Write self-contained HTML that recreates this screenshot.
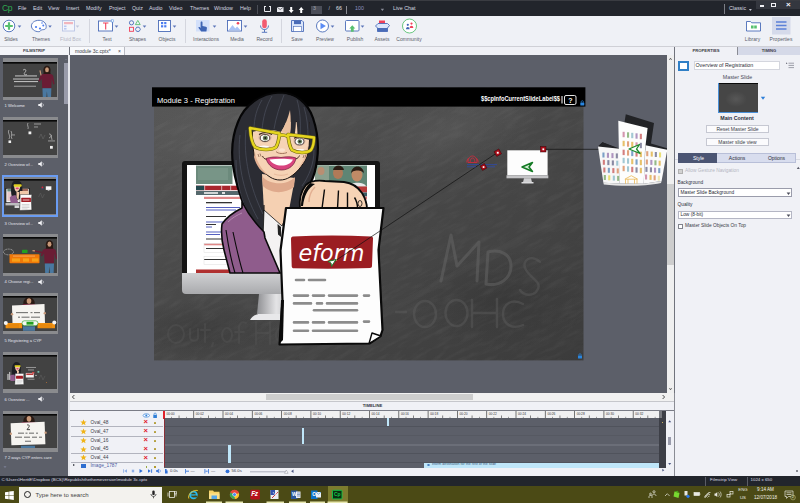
<!DOCTYPE html>
<html><head><meta charset="utf-8"><title>Adobe Captivate</title>
<style>
*{box-sizing:border-box;margin:0;padding:0}
html,body{width:800px;height:503px;overflow:hidden;background:#5c5f69;font-family:"Liberation Sans",sans-serif;}
#app{position:absolute;left:0;top:0;width:800px;height:503px;overflow:hidden;background:#5c5f69}
.abs{position:absolute}
.t{position:absolute;white-space:nowrap;line-height:1}
/* menu */
#menubar{left:0;top:0;width:800px;height:16px;background:#22252c;border-top:1px solid #3a3c42}
#menubar .m{position:absolute;top:5.2px;font-size:5.3px;color:#d6d8e0;white-space:nowrap;line-height:1}
/* toolbar */
#toolbar{left:0;top:16px;width:800px;height:30px;background:#eff1f6}
#toolbar .lbl{position:absolute;top:20.5px;font-size:5px;color:#5a5c66;white-space:nowrap;line-height:1;transform:translateX(-50%)}
#tabrow{left:0;top:46px;width:800px;height:9px;background:#f0f1f6;border-top:1px solid #cfd0d6}
</style></head><body>
<div id="app">
<!--MENUBAR-->
<div id="menubar" class="abs">
<div class="t" style="left:2px;top:3px;font-size:8.6px;color:#2fa84f;letter-spacing:-0.4px">Cp</div>
<div class="m" style="left:18px">File</div>
<div class="m" style="left:33px">Edit</div>
<div class="m" style="left:48px">View</div>
<div class="m" style="left:66px">Insert</div>
<div class="m" style="left:86px">Modify</div>
<div class="m" style="left:109px">Project</div>
<div class="m" style="left:132px">Quiz</div>
<div class="m" style="left:149px">Audio</div>
<div class="m" style="left:169px">Video</div>
<div class="m" style="left:190px">Themes</div>
<div class="m" style="left:214px">Window</div>
<div class="m" style="left:240px">Help</div>
<div class="abs" style="left:257px;top:4px;width:1px;height:9px;background:#4a4d55"></div>
<svg class="abs" style="left:262px;top:2px" width="46" height="12" viewBox="0 0 46 12">
<path d="M2.5 3.5v5h6v-5M2 3.5h2M7 3.5h2" fill="none" stroke="#e8e9ee" stroke-width="1"/>
<rect x="15" y="4" width="6.5" height="5" fill="#e8e9ee"/><path d="M15 4l3.2 2.6L21.5 4" fill="none" stroke="#22252c" stroke-width=".6"/>
<path d="M28.2 4h2v3h1.5l-2.5 3-2.5-3h1.5z" fill="#fff"/>
<path d="M38.2 10h2v-3h1.5l-2.5-3-2.5 3h1.5z" fill="#fff"/>
</svg>
<div class="abs" style="left:310.5px;top:5px;width:11.5px;height:8px;background:#4b4e58"></div>
<div class="m" style="left:313px;color:#9da0ab">3</div>
<div class="m" style="left:328.5px;color:#b9bbc6">/</div>
<div class="m" style="left:336px;color:#e0e1e8">66</div>
<div class="abs" style="left:346px;top:5px;width:1px;height:8px;background:#8a8c94"></div>
<div class="m" style="left:355px;color:#8f92c0">100</div>
<svg class="abs" style="left:379.500px;top:7px" width="5" height="4" viewBox="0 0 5 4"><path d="M.7 .8h3.400l-1.700 2.200z" fill="#8a8d99"/></svg>
<div class="m" style="left:393px">Live Chat</div>
<div class="abs" style="left:723.5px;top:3px;width:1px;height:10px;background:#7c7e86"></div>
<div class="m" style="left:729px">Classic</div>
<svg class="abs" style="left:747.500px;top:7px" width="5" height="4" viewBox="0 0 5 4"><path d="M.9 .9h3l-1.500 2z" fill="#c0c2cc"/></svg>
<div class="abs" style="left:756px;top:0px;width:44px;height:7.5px;background:#34373f"></div>
<div class="abs" style="left:760px;top:4px;width:4px;height:1.6px;background:#f0f0f4"></div>
<div class="abs" style="left:771px;top:1.5px;width:5px;height:4.5px;border:1.2px solid #f0f0f4"></div>
<div class="t" style="left:786px;top:-0.5px;font-size:8px;color:#f4f4f8;font-weight:bold">×</div>
</div>
<!--TOOLBAR-->
<div id="toolbar" class="abs">
<svg class="abs" style="left:0;top:0" width="800" height="30" viewBox="0 0 800 30">
<!-- slides -->
<circle cx="9" cy="10" r="5.8" fill="#fff" stroke="#4a6cb8" stroke-width="0.9"/>
<path d="M9 6.2v7.6M5.2 10h7.6" stroke="#58c070" stroke-width="2.2"/>
<path d="M17.7 9.5h3.600l-1.800 2.200z" fill="#5a74b8"/>
<!-- themes -->
<path d="M39 4.3c-4.6 0-7.6 2.8-7.6 5.6 0 3 3 5.8 7.4 5.8 1.8 0 1.6-1.4 2.8-1.8 1.6-.5 4.6.4 4.6-3.4 0-3.6-3.2-6.2-7.200-6.200z" fill="#fff" stroke="#4a6cb8" stroke-width="0.9"/>
<circle cx="36" cy="11" r="1.1" fill="#4c7df0"/><circle cx="40" cy="12.5" r="1.1" fill="#4c7df0"/><circle cx="43.300" cy="9.5" r="1" fill="#4c7df0"/><circle cx="42" cy="7" r=".8" fill="#4c7df0"/>
<path d="M48.2 9.5h3.600l-1.800 2.200z" fill="#5a74b8"/>
<!-- fluid box (disabled) -->
<rect x="62.500" y="4.500" width="12" height="10.500" fill="#f4f6fb" stroke="#b9c4e4" stroke-width="0.9"/>
<rect x="64" y="6" width="9" height="2.200" fill="#f2b6bd"/><rect x="64" y="9.500" width="2.500" height="1.600" fill="#b9c8f4"/><rect x="64" y="12" width="2.500" height="1.600" fill="#b9c8f4"/>
<path d="M75.7 9.5h3.600l-1.800 2.200z" fill="#c0c6dc"/>
<rect x="89" y="3" width="1" height="24" fill="#d4d6de"/>
<!-- text -->
<rect x="98.500" y="5" width="14" height="10" fill="#fff" stroke="#4a6cb8" stroke-width="0.9"/>
<rect x="111.300" y="3.800" width="2.200" height="2.200" fill="#fff" stroke="#6aa0e8" stroke-width="0.600"/>
<path d="M103 7h5.400M105.700 7v6.400" stroke="#f0405a" stroke-width="1.100" fill="none"/>
<path d="M114.7 9.5h3.600l-1.800 2.200z" fill="#5a74b8"/>
<!-- shapes -->
<circle cx="131.500" cy="6.800" r="2.100" fill="none" stroke="#4a6cb8" stroke-width="0.9"/>
<path d="M135.400 8.600l2.400-4.200 2.400 4.200z" fill="none" stroke="#58c070" stroke-width="0.9"/>
<rect x="129.500" y="11.300" width="4" height="4" fill="none" stroke="#f0405a" stroke-width="0.9"/>
<path d="M136.700 11.200h2.400l1.300 2.100-1.300 2.100h-2.400l-1.300-2.100z" fill="none" stroke="#4a6cb8" stroke-width="0.9"/>
<path d="M142.7 9.5h3.600l-1.800 2.200z" fill="#5a74b8"/>
<!-- objects -->
<rect x="158.500" y="4.500" width="12" height="11" fill="#fff" stroke="#4a6cb8" stroke-width="0.9"/>
<rect x="161" y="6" width="2.200" height="2.200" fill="#4c7df0"/><rect x="164.200" y="6" width="2.200" height="2.200" fill="#4c7df0"/><rect x="161" y="9.200" width="2.200" height="2.200" fill="#4c7df0"/><rect x="164.200" y="9.200" width="2.200" height="2.200" fill="#4c7df0"/>
<path d="M172.7 9.5h3.600l-1.800 2.200z" fill="#5a74b8"/>
<rect x="185" y="3" width="1" height="24" fill="#d4d6de"/>
<!-- interactions -->
<rect x="196" y="4" width="13.500" height="11.500" fill="#d3e0fa"/>
<path d="M201.500 5.500c.8 0 1 .5 1 1.200v3.300l3.400.7c.8.200 1.100.7 1 1.500l-.5 3.300h-5.200l-2.600-3.600c-.4-.6.300-1.300 1-.8l1 .8v-5.200c0-.7.200-1.200.9-1.200z" fill="#3d64b4"/>
<path d="M212.7 9.5h3.600l-1.800 2.200z" fill="#5a74b8"/>
<!-- media -->
<rect x="227.500" y="4.500" width="14" height="10.500" fill="#fff" stroke="#4a6cb8" stroke-width="0.9"/>
<path d="M228.500 14.200l4-5.200 2.800 3.400 1.800-1.800 3.400 3.600z" fill="#a9c2f6"/>
<circle cx="238" cy="7.300" r="1.300" fill="#f0405a"/>
<path d="M243.7 9.5h3.600l-1.800 2.200z" fill="#5a74b8"/>
<!-- record -->
<rect x="262.200" y="3.200" width="4.600" height="9" rx="2.300" fill="#f25a70"/>
<path d="M260.500 9.500c0 5.400 8 5.400 8 0M264.500 13.600v2.400M261.800 16.300h5.400" fill="none" stroke="#4a6cb8" stroke-width="0.9"/>
<rect x="281" y="3" width="1" height="24" fill="#d4d6de"/>
<!-- save -->
<path d="M291.500 4.500h10.500l1.500 1.500v9.500h-12z" fill="#dbe6fb" stroke="#4a6cb8" stroke-width="0.9"/>
<rect x="294" y="4.500" width="7" height="3.600" fill="#4a6cb8"/><rect x="293.500" y="10.500" width="8" height="5" fill="#fff" stroke="#4a6cb8" stroke-width="0.600"/>
<!-- preview -->
<circle cx="322.500" cy="10" r="6" fill="#fff" stroke="#4a6cb8" stroke-width="0.9"/>
<path d="M320.500 6.800v6.400l5.400-3.200z" fill="#5b8cf5"/>
<path d="M330.7 9.5h3.600l-1.800 2.200z" fill="#5a74b8"/>
<!-- publish -->
<rect x="345.500" y="4.500" width="13.500" height="10.500" rx="1" fill="#fff" stroke="#4a6cb8" stroke-width="0.9"/>
<path d="M352.300 9.300l3 3.200h-1.600v3.300h-2.800v-3.300h-1.600z" fill="#58c070"/>
<path d="M360.7 9.5h3.600l-1.800 2.200z" fill="#5a74b8"/>
<!-- assets -->
<path d="M379 4.500h6v5h-6z" fill="#f0405a"/>
<path d="M375.500 10l2.500-2.500h9.500l2 2-2 2.500v3.500h-10v-3.500z" fill="#dbe6fb" stroke="#4a6cb8" stroke-width="0.9"/>
<rect x="377.500" y="12" width="10" height="3.500" fill="#4a6cb8"/>
<!-- community -->
<circle cx="409.500" cy="10" r="7" fill="#fff" stroke="#58c070" stroke-width="0.9"/>
<circle cx="407.800" cy="8.800" r="1.100" fill="#3d64b4"/><path d="M406 13.200c0-3 3.600-3 3.600 0z" fill="#3d64b4"/>
<circle cx="411.500" cy="7.600" r="1.100" fill="#f0405a"/><path d="M409.700 12c0-3 3.600-3 3.600 0z" fill="#f0405a"/>
<!-- library -->
<path d="M746.500 5.500h4l1.200 1.300h8.800v8.200h-14z" fill="#fff" stroke="#4a6cb8" stroke-width="0.9"/>
<rect x="751" y="9.500" width="2.600" height="3" fill="#58c070"/><rect x="754.200" y="9.500" width="2.600" height="3" fill="#58c070"/>
<!-- properties -->
<rect x="772" y="1" width="18.500" height="17.500" fill="#d5daea"/>
<path d="M776 6h10.500M776 9.500h10.500M776 13h10.500" stroke="#5b80d8" stroke-width="1.300"/>
</svg>
<div class="lbl" style="left:11px;color:#5a5c68">Slides</div>
<div class="lbl" style="left:41px;color:#5a5c68">Themes</div>
<div class="lbl" style="left:70.5px;color:#b4b7c4">Fluid Box</div>
<div class="lbl" style="left:107px;color:#5a5c68">Text</div>
<div class="lbl" style="left:137.5px;color:#5a5c68">Shapes</div>
<div class="lbl" style="left:167px;color:#5a5c68">Objects</div>
<div class="lbl" style="left:206px;color:#5a5c68">Interactions</div>
<div class="lbl" style="left:237px;color:#5a5c68">Media</div>
<div class="lbl" style="left:264.5px;color:#5a5c68">Record</div>
<div class="lbl" style="left:297px;color:#5a5c68">Save</div>
<div class="lbl" style="left:325px;color:#5a5c68">Preview</div>
<div class="lbl" style="left:355px;color:#5a5c68">Publish</div>
<div class="lbl" style="left:382px;color:#5a5c68">Assets</div>
<div class="lbl" style="left:409px;color:#5a5c68">Community</div>
<div class="lbl" style="left:752.5px;color:#5a5c68">Library</div>
<div class="lbl" style="left:781px;color:#5a5c68">Properties</div>
</div>
<!--TABROW-->
<div id="tabrow" class="abs">
<div class="abs" style="left:0;top:0;width:69px;height:8px;background:#f4f5f9"></div>
<div class="t" style="left:34px;top:2px;font-size:4.2px;font-weight:bold;color:#3a3c46;transform:translateX(-50%)">FILMSTRIP</div>
<div class="abs" style="left:69px;top:0;width:1px;height:8px;background:#70737c"></div>
<div class="abs" style="left:70px;top:0;width:55px;height:8px;background:#f8f9fc;border-right:1px solid #b8bac2"></div>
<div class="t" style="left:75px;top:1.5px;font-size:5px;color:#3a3c46">module 3c.cptx*</div>
<div class="t" style="left:118px;top:1.5px;font-size:5px;color:#3a3c46">×</div>
<div class="abs" style="left:674px;top:0;width:1px;height:8px;background:#70737c"></div>
<div class="abs" style="left:737px;top:0;width:63px;height:8px;background:#d5d9e8;border-left:1px solid #8a8c94"></div>
<div class="t" style="left:706px;top:2px;font-size:4.2px;font-weight:bold;color:#3a3c46;transform:translateX(-50%)">PROPERTIES</div>
<div class="t" style="left:769px;top:2px;font-size:4.2px;font-weight:bold;color:#3a3c46;transform:translateX(-50%)">TIMING</div>
</div>
<!--FILMSTRIP-->
<div class="abs" id="filmstrip" style="left:0;top:55px;width:68px;height:421px;background:#5c5f69"></div>
<div class="abs" style="left:68px;top:55px;width:2px;height:421px;background:#e6e7ec"></div>
<div class="abs" style="left:64px;top:63px;width:3.5px;height:41px;background:#9a9cab"></div>
<div class="abs" style="left:64.5px;top:58.5px;border-left:1.2px solid transparent;border-right:1.2px solid transparent;border-bottom:1.6px solid #7d8196"></div>
<svg class="abs" style="left:2px;top:465px" width="6" height="4" viewBox="0 0 6 4"><path d="M1.500 1.200l1.500 1.800 1.500-1.800z" fill="#7d8196"/></svg>
<div class="abs" style="left:3px;top:58px;width:54.500px;height:41.500px;background:#8a8b8e"></div>
<div class="abs thumb" id="th1" style="left:3px;top:61.5px;width:54px;height:35.600px;background:#404040;overflow:hidden"><svg class="abs" style="left:0;top:0;width:100%;height:100%" viewBox="0 0 54 34.500" preserveAspectRatio="none"><rect width="54" height="34.500" fill="#424242"/><rect width="54" height="1.600" fill="#080808"/><g fill="none" stroke="#e4e4e4" stroke-width=".9" opacity=".9"><path d="M12 13.500h22M10 16.500h26M11 19h24"/></g><path d="M11 23.500h22" stroke="#b8b8b8" stroke-width=".8"/><path d="M20 8c2-2 4 0 2 2s0 3 2 2" stroke="#e0e0e0" stroke-width=".7" fill="none"/><g transform="translate(44 7) scale(0.95)"><path d="M-3.500 3c-1-4 1-6.500 3.500-6.500s4.500 2.500 3.500 6.500l1 6h-9z" fill="#2a1a14"/><ellipse cx="0" cy="0.500" rx="2" ry="2.600" fill="#c89878"/><path d="M-4 5c-1.500 0-3 1-3.500 3l-1.500 4 1.500.5 2-3 .5 10h9.500l.5-10 1.500 6 1.500-.5-1.500-8c-.5-1.500-2-2-3.500-2z" fill="#6a1c34"/><path d="M-4.800 19.500h9.400l-.4 10h-3.600l-.7-7-.7 7h-3.600z" fill="#4a78a0"/></g><path d="M38 13l-1-5" stroke="#c89878" stroke-width="1.200"/></svg></div>
<div class="t" style="left:4.500px;top:103.9px;font-size:4.100px;color:#e4e6ee">1 Welcome</div>
<svg class="abs" style="left:37.5px;top:102px" width="7" height="6" viewBox="0 0 7 6"><path d="M0.300 2h1.500l2-1.700v5.400l-2-1.700h-1.500z" fill="#f2f2f5"/><path d="M4.600 1.500c1 .8 1 2.200 0 3" stroke="#f2f2f5" stroke-width=".6" fill="none"/></svg>
<div class="abs" style="left:3px;top:117px;width:54.500px;height:40.6px;background:#8a8b8e"></div>
<div class="abs thumb" id="th2" style="left:3px;top:120.3px;width:54px;height:34.4px;background:#404040;overflow:hidden"><svg class="abs" style="left:0;top:0;width:100%;height:100%" viewBox="0 0 54 34.500" preserveAspectRatio="none"><rect width="54" height="34.500" fill="#424242"/><rect width="54" height="1.600" fill="#080808"/><g fill="#f0f0f0"><rect x="5.500" y="20.500" width="2.600" height="2.600"/><rect x="25.500" y="11.500" width="2.800" height="2.800"/><rect x="47" y="26" width="2.800" height="2.800"/></g><g stroke="#d8d8d8" stroke-width=".7" fill="none" opacity=".85"><path d="M6 10c-2 3 2 5 0 9M8 11c2 3-1 5 1 8M25 3c-1.500 2 1 4 0 6M46 14c3 0 3 3 0 4M48 15l1 5M45 21h7"/><path d="M31 4h7M31 7h4M9 15h3"/></g><path d="M36 18l2-4 2 5 2-4" stroke="#666" stroke-width=".6" fill="none"/></svg></div>
<div class="t" style="left:4.500px;top:162.9px;font-size:4.100px;color:#e4e6ee">2 Overview of...</div>
<svg class="abs" style="left:37.5px;top:161px" width="7" height="6" viewBox="0 0 7 6"><path d="M0.300 2h1.500l2-1.700v5.400l-2-1.700h-1.500z" fill="#f2f2f5"/><path d="M4.600 1.500c1 .8 1 2.200 0 3" stroke="#f2f2f5" stroke-width=".6" fill="none"/></svg>
<div class="abs" style="left:1.900px;top:175.400px;width:55.900px;height:41.600px;background:#6a9cf2"></div>
<div class="abs" style="left:4px;top:177.300px;width:51.900px;height:37.900px;background:#808286"></div>
<div class="abs thumb" id="th3" style="left:4px;top:179px;width:51.900px;height:34.500px;background:#404040;overflow:hidden"><svg class="abs" style="left:0;top:0;width:100%;height:100%" viewBox="0 0 54 34.500" preserveAspectRatio="none"><rect width="54" height="34.500" fill="#424242"/><rect width="54" height="1.600" fill="#080808"/><rect x="1.600" y="9" width="25" height="15" fill="#151515"/><rect x="2.400" y="9.700" width="23.400" height="13.600" fill="#f4f4f4"/><rect x="3.500" y="10" width="5" height="2.500" fill="#6c8a7c"/><rect x="3.500" y="13" width="4" height="9" fill="#e8c8c8"/><rect x="18.500" y="9.800" width="6.500" height="3" fill="#a06858"/><rect x="1.600" y="24" width="25" height="2.400" fill="#bcbcbe"/><rect x="11" y="26.400" width="5" height="2.600" fill="#d8d8da"/><path d="M12.500 1.200c-3 0-4.500 3-5 7-.5 4 0 9 1.500 12l3 2 6-3c1.500-4 1.500-10 .5-14-.8-3-3-4-6-4z" fill="#1e1f24"/><path d="M10.500 6c0 3 .5 6 3 7 2-1 3.500-3.500 3.500-6.500z" fill="#f0c8a8"/><rect x="10" y="5.300" width="8.400" height="2.400" rx="1" fill="#e0d020"/><ellipse cx="13.800" cy="9.300" rx="1.700" ry=".9" fill="#d8407a"/><path d="M7.500 17l-1.500 1.500 1 5.500h8l-3-8z" fill="#8f5c8c"/><path d="M13 13l0 5 2 4 1-9z" fill="#f0c8a8"/><path d="M16.500 12h9v4h-9z" fill="#f0c8a8"/><path d="M16.800 15.500h12.200l-.5 5 .4 10.500-12.600.5.300-6z" fill="#fafafa" stroke="#111" stroke-width=".4"/><rect x="18" y="18.800" width="10" height="4.200" rx=".5" fill="#a01c24"/><path d="M19.500 21h7" stroke="#f4d8d8" stroke-width=".9"/><g stroke="#b0b0b0" stroke-width=".5"><path d="M18.500 25.500h8M18.500 27h8M18.500 28.500h8M18.500 30h6"/></g><rect x="43.500" y="7.300" width="5.800" height="3.600" fill="#fafafa"/><rect x="45.500" y="10.900" width="1.800" height=".8" fill="#c8c8c8"/><circle cx="40" cy="8.500" r=".9" fill="#d8283c"/><path d="M38.500 9.800h3" stroke="#3050b0" stroke-width=".4"/><path d="M36 18l2-4 2 5 2-4" stroke="#5e5e5e" stroke-width=".6" fill="none"/></svg></div>
<div class="t" style="left:4.500px;top:221.9px;font-size:4.100px;color:#e4e6ee">3 Overview of...</div>
<svg class="abs" style="left:37.5px;top:220px" width="7" height="6" viewBox="0 0 7 6"><path d="M0.300 2h1.500l2-1.700v5.400l-2-1.700h-1.500z" fill="#f2f2f5"/><path d="M4.600 1.500c1 .8 1 2.200 0 3" stroke="#f2f2f5" stroke-width=".6" fill="none"/></svg>
<div class="abs" style="left:3px;top:234px;width:54.500px;height:41.500px;background:#8a8b8e"></div>
<div class="abs thumb" id="th4" style="left:3px;top:237.4px;width:54px;height:35.600px;background:#404040;overflow:hidden"><svg class="abs" style="left:0;top:0;width:100%;height:100%" viewBox="0 0 54 34.500" preserveAspectRatio="none"><rect width="54" height="34.500" fill="#424242"/><rect width="54" height="1.600" fill="#080808"/><ellipse cx="5.500" cy="14.500" rx="5" ry="2.800" fill="none" stroke="#e0e0e0" stroke-width=".6" stroke-dasharray="1 .6"/><rect x="19" y="12.300" width="5.500" height="3.200" rx=".5" fill="#22a020"/><rect x="6.500" y="16.600" width="30" height="8.800" rx=".8" fill="#f07808"/><path d="M10 18.500h22" stroke="#f8b070" stroke-width=".8"/><g fill="#f8a018"><rect x="9" y="20.700" width="8" height="3.200"/><rect x="20" y="20.700" width="6" height="3.200"/><rect x="29" y="20.700" width="6.500" height="3.200"/></g><g transform="translate(46.5 6.5) scale(0.98)"><path d="M-3.500 3c-1-4 1-6.500 3.500-6.500s4.500 2.500 3.500 6.500l1 6h-9z" fill="#2a1a14"/><ellipse cx="0" cy="0.500" rx="2" ry="2.600" fill="#c89878"/><path d="M-4 5c-1.500 0-3 1-3.500 3l-1.500 4 1.500.5 2-3 .5 10h9.500l.5-10 1.500 6 1.500-.5-1.500-8c-.5-1.500-2-2-3.500-2z" fill="#6a1c34"/><path d="M-4.800 19.500h9.400l-.4 10h-3.600l-.7-7-.7 7h-3.600z" fill="#4a78a0"/></g><path d="M39 15l-8-1.500" stroke="#6a1c34" stroke-width="1.300"/><path d="M32 13.500l-2.500-.3" stroke="#c89878" stroke-width="1.100"/></svg></div>
<div class="t" style="left:4.500px;top:280.4px;font-size:4.100px;color:#e4e6ee">4 Choose regi...</div>
<svg class="abs" style="left:37.5px;top:278.5px" width="7" height="6" viewBox="0 0 7 6"><path d="M0.300 2h1.500l2-1.700v5.400l-2-1.700h-1.500z" fill="#f2f2f5"/><path d="M4.600 1.500c1 .8 1 2.200 0 3" stroke="#f2f2f5" stroke-width=".6" fill="none"/></svg>
<div class="abs" style="left:3px;top:293px;width:54.500px;height:40.8px;background:#8a8b8e"></div>
<div class="abs thumb" id="th5" style="left:3px;top:296.2px;width:54px;height:34.8px;background:#404040;overflow:hidden"><svg class="abs" style="left:0;top:0;width:100%;height:100%" viewBox="0 0 54 34.500" preserveAspectRatio="none"><rect width="54" height="34.500" fill="#424242"/><rect width="54" height="1.600" fill="#080808"/><path d="M20.500 9c-1-5 2-7.500 5.500-7.500s6.500 2.500 5.500 7.500z" fill="#2a1a14"/><ellipse cx="26" cy="5" rx="2.300" ry="2.800" fill="#c89878"/><path d="M20 8h12l2 4h-16z" fill="#6a1c34"/><rect x="20" y="30" width="12" height="4.500" fill="#4a78a0"/><path d="M9 9.500l32.500-1.500.5 19.500-32.500.5z" fill="#f6f4f0"/><g stroke="#444" stroke-width=".8" fill="none"><path d="M13 16.500h12M27.500 16.500h2M31 16.500h6M15 21h2M18.500 21h8M28 21h9"/></g><circle cx="9" cy="18" r="1.200" fill="#c89878"/><circle cx="41.800" cy="17" r="1.200" fill="#c89878"/><g transform="translate(0 -1.200)"><rect x="2.600" y="28" width="16.500" height="5.200" rx=".6" fill="#f09010"/><rect x="34.500" y="28" width="17.500" height="5.200" rx=".6" fill="#f09010"/><path d="M5 30h11M5 32h11M37 30h12M37 32h12" stroke="#c87008" stroke-width=".5"/><rect x="19" y="25.800" width="16" height="4.800" rx="2.400" fill="#f4f8f4" stroke="#22a020" stroke-width=".6"/><rect x="23.500" y="26.800" width="7" height="2.800" fill="#22a020"/><circle cx="2.800" cy="28" r="2" fill="#f4f4f4"/><circle cx="51.300" cy="27.500" r="2" fill="#f4f4f4"/></g></svg></div>
<div class="t" style="left:4.500px;top:338.9px;font-size:4.100px;color:#e4e6ee">5 Registering a CYP</div>
<div class="abs" style="left:3px;top:352px;width:54.500px;height:40.6px;background:#8a8b8e"></div>
<div class="abs thumb" id="th6" style="left:3px;top:355.1px;width:54px;height:34.4px;background:#404040;overflow:hidden"><svg class="abs" style="left:0;top:0;width:100%;height:100%" viewBox="0 0 54 34.500" preserveAspectRatio="none"><rect width="54" height="34.500" fill="#424242"/><rect width="54" height="1.600" fill="#080808"/><path d="M13.500 7c-2.500 0-4 2.500-4.500 6-.4 3 0 7 1 9l2.500 1.500 4.500-2c1-3 1-8 .5-11-.6-2.500-2-3.500-4-3.500z" fill="#1e1f24"/><path d="M12 11c0 2.500.5 4.500 2.500 5.500 1.500-1 2.500-3 2.500-5z" fill="#f0c8a8"/><rect x="11.600" y="10.300" width="6" height="1.700" rx=".6" fill="#e0d020"/><ellipse cx="14.500" cy="13.800" rx="1.200" ry=".7" fill="#d8407a"/><path d="M8 20l-1.500 1 1 5h6l-2-6.500z" fill="#8f5c8c"/><path d="M14 16l0 3 1.500 1 .5-4z" fill="#f0c8a8"/><rect x="4.500" y="19" width="1" height="6" fill="#e8e8e8"/><rect x="6.200" y="17" width="1" height="8" fill="#d0d0d0"/><path d="M12.200 18.500h8.600l-.3 4 .3 7-9 .4.300-5z" fill="#fafafa" stroke="#111" stroke-width=".3"/><rect x="13" y="20.800" width="7" height="3" rx=".4" fill="#a01c24"/><g stroke="#b0b0b0" stroke-width=".4"><path d="M13.500 25.500h6M13.500 26.800h6M13.500 28h5"/></g><rect x="22.800" y="18" width="8" height="4.600" fill="#f4f4f4"/><rect x="23.300" y="18.500" width="7" height="1.600" fill="#b83a3a"/><rect x="29" y="17" width="2.400" height="1.600" fill="#c84848"/><g stroke="#e0e0e0" stroke-width=".6" fill="none" opacity=".9"><path d="M23 12.500h10M25 15h6M24.500 24.300h7"/><path d="M32 20.500h2"/></g><rect x="34.500" y="16" width="1.800" height="1.800" fill="#70b8a8"/><path d="M36 24l2-4 2 5 2-4" stroke="#5e5e5e" stroke-width=".6" fill="none"/><circle cx="43.500" cy="27.500" r=".5" fill="#c87830"/></svg></div>
<div class="t" style="left:4.500px;top:397.9px;font-size:4.100px;color:#e4e6ee">6 Overview ...</div>
<svg class="abs" style="left:37.5px;top:396px" width="7" height="6" viewBox="0 0 7 6"><path d="M0.300 2h1.500l2-1.700v5.400l-2-1.700h-1.500z" fill="#f2f2f5"/><path d="M4.600 1.500c1 .8 1 2.200 0 3" stroke="#f2f2f5" stroke-width=".6" fill="none"/></svg>
<div class="abs" style="left:3px;top:411px;width:54.500px;height:40.700px;background:#8a8b8e"></div>
<div class="abs thumb" id="th7" style="left:3px;top:413.500px;width:54px;height:34.800px;background:#404040;overflow:hidden"><svg class="abs" style="left:0;top:0;width:100%;height:100%" viewBox="0 0 54 34.500" preserveAspectRatio="none"><rect width="54" height="34.500" fill="#424242"/><rect width="54" height="1.600" fill="#080808"/><path d="M20.500 9c-1-5 2-7.500 5.500-7.500s6.500 2.500 5.500 7.500z" fill="#2a1a14"/><ellipse cx="26" cy="4.800" rx="2.300" ry="2.800" fill="#c89878"/><path d="M19 8h14l2 4h-18z" fill="#6a1c34"/><rect x="18" y="31.500" width="14" height="3" fill="#4a78a0"/><path d="M7.600 9.200l34-1.600.8 22.400-34 1z" fill="#f6f4f0"/><path d="M24 11c2-1 3 1 1.500 2.500l-1.500 2h3" stroke="#333" stroke-width=".9" fill="none"/><g stroke="#444" stroke-width=".8" fill="none"><path d="M15 19h6M22.500 19h2M26 19h5M33 19h2M12 23h7M21 23h6M29 23h5M36 23h3M22 27h6"/></g><circle cx="7.800" cy="19.500" r="1.200" fill="#c89878"/><circle cx="42.600" cy="18.500" r="1.200" fill="#c89878"/></svg></div>
<div class="t" style="left:4.500px;top:455.8px;font-size:4.100px;color:#e4e6ee">7 2 ways CYP enters care</div>

<!--STAGE-->
<div class="abs" id="stage" style="left:70px;top:55px;width:596.500px;height:338px;background:#5c5f69"></div>
<div class="abs" style="left:666.500px;top:55px;width:7.500px;height:338px;background:#efefef"></div>
<div class="abs" style="left:666.500px;top:184px;width:7.500px;height:81px;background:#cdcdcd"></div>
<div class="abs" style="left:669px;top:58px;width:3px;height:3px;border-left:1px solid #555;border-top:1px solid #555;transform:rotate(45deg) scale(.7)"></div>
<div class="abs" style="left:669px;top:387px;width:3px;height:3px;border-right:1px solid #555;border-bottom:1px solid #555;transform:rotate(45deg) scale(.7)"></div>
<svg class="abs" style="left:70px;top:55px" width="596.500" height="338" viewBox="70 55 596.500 338">
<defs>
<linearGradient id="cb" x1="0" y1="0" x2="1" y2="1"><stop offset="0" stop-color="#575757"/><stop offset=".35" stop-color="#4a4a4a"/><stop offset=".7" stop-color="#434343"/><stop offset="1" stop-color="#3b3b3b"/></linearGradient>
<radialGradient id="sm1" cx=".5" cy=".5" r=".5"><stop offset="0" stop-color="#6a6a6a" stop-opacity=".35"/><stop offset="1" stop-color="#6a6a6a" stop-opacity="0"/></radialGradient>
<radialGradient id="sm2" cx=".5" cy=".5" r=".5"><stop offset="0" stop-color="#2e2e2e" stop-opacity=".4"/><stop offset="1" stop-color="#2e2e2e" stop-opacity="0"/></radialGradient>
<linearGradient id="alu" x1="0" y1="0" x2="0" y2="1"><stop offset="0" stop-color="#d0d1d3"/><stop offset="1" stop-color="#a9aaad"/></linearGradient>
<linearGradient id="stand" x1="0" y1="0" x2="1" y2="0"><stop offset="0" stop-color="#8e8f92"/><stop offset=".4" stop-color="#e4e4e6"/><stop offset="1" stop-color="#9a9b9e"/></linearGradient>
<filter id="chalk" x="0" y="0" width="100%" height="100%"><feTurbulence type="fractalNoise" baseFrequency="0.05 0.25" numOctaves="3" seed="3" result="n"/><feColorMatrix type="matrix" values="0 0 0 0 0.62  0 0 0 0 0.62  0 0 0 0 0.62  0.9 0 0 0 -0.36"/></filter>
<clipPath id="slideclip"><rect x="154" y="87" width="429.500" height="273.400"/></clipPath>
</defs>
<!-- slide -->
<rect x="154" y="106" width="429.500" height="254.400" fill="url(#cb)"/>
<g clip-path="url(#slideclip)">
<ellipse cx="230" cy="140" rx="90" ry="45" fill="url(#sm1)"/>
<ellipse cx="450" cy="130" rx="110" ry="40" fill="url(#sm1)" transform="rotate(-20 450 130)"/>
<ellipse cx="500" cy="300" rx="90" ry="50" fill="url(#sm2)"/>
<ellipse cx="200" cy="330" rx="80" ry="30" fill="url(#sm2)"/>
<rect x="-80" y="40" width="760" height="420" filter="url(#chalk)" opacity=".14" transform="rotate(-28 368 233)"/>
<g stroke="#5d5d5d" stroke-width="7" opacity=".13"><path d="M380 230L590 120M300 360L590 200M154 200L330 106"/></g>
<!-- chalk writing -->
<g fill="none" stroke="#666" stroke-width="3" stroke-linecap="round" stroke-linejoin="round" opacity=".52">
<path d="M441 281L451 235L457 266L479 242L477 281"/>
<path d="M488 252L486 284C500 287 511 278 511 266C511 254 500 249 488 252Z"/>
</g>
<g fill="none" stroke="#5c5c5c" stroke-width="2.400" stroke-linecap="round" opacity=".48">
<path d="M540 262C532 254 520 260 526 270C532 280 544 282 536 292C532 296 524 296 520 290"/>
<path d="M396 312h10"/>
<ellipse cx="425" cy="314" rx="11" ry="13"/><ellipse cx="456.500" cy="313" rx="11" ry="13"/>
<path d="M472 300v27M472 313h25M497 299v28"/>
<path d="M523 304C512 298 503 304 503 314C503 324 512 330 523 325"/>
</g>
<g fill="none" stroke="#555" stroke-width="2" stroke-linecap="round" opacity=".42">
<ellipse cx="176" cy="334" rx="8" ry="9"/><path d="M190 329v8c0 5 8 5 8 0v-8M205 324v18M201 330h9M213 343l-1 3"/>
<ellipse cx="227" cy="335" rx="5" ry="7"/><path d="M246 323c-5-2-7 1-7 5v15M235 332h9"/>
<path d="M256 322v22M256 333h14M270 322v22"/><ellipse cx="281" cy="335" rx="5" ry="7"/>
</g>
</g>
<!-- header -->
<rect x="152" y="87.300" width="433.400" height="19.300" fill="#000"/>
<text x="157" y="102.700" font-size="7.600" fill="#fff" font-family="Liberation Sans, sans-serif" textLength="78" lengthAdjust="spacingAndGlyphs">Module 3 - Registration</text>
<text x="481" y="101.300" font-size="7.200" font-weight="bold" fill="#fff" font-family="Liberation Sans, sans-serif" textLength="79" lengthAdjust="spacingAndGlyphs">$$cpInfoCurrentSlideLabel$$</text>
<rect x="561.500" y="96" width="1" height="7.500" fill="#fff"/>
<rect x="564.500" y="95.500" width="11.500" height="9" rx="1.500" fill="none" stroke="#fff" stroke-width=".9"/>
<text x="568.300" y="102.800" font-size="7" font-weight="bold" fill="#fff" font-family="Liberation Sans, sans-serif">?</text>
<rect x="580.300" y="102.500" width="4" height="3" rx=".5" fill="#2a86e0"/><path d="M581.200 102.500v-.8c0-1.300 2.200-1.300 2.200 0v.8" fill="none" stroke="#2a86e0" stroke-width=".7"/>
<rect x="578" y="355.500" width="4" height="3" rx=".5" fill="#2a86e0"/><path d="M578.900 355.500v-.8c0-1.300 2.200-1.300 2.200 0v.8" fill="none" stroke="#2a86e0" stroke-width=".7"/>
<g id="imac">
<path d="M185 161h192a3 3 0 0 1 3 3v109h-198v-109a3 3 0 0 1 3-3z" fill="#141414"/>
<path d="M182 273h198v17a4 4 0 0 1-4 4h-190a4 4 0 0 1-4-4z" fill="url(#alu)"/>
<path d="M259 294h44l2 20h-48z" fill="url(#stand)"/>
<path d="M250 320c2-4 6-6 10-6h44v6z" fill="#e8e8ea"/>
<rect x="187" y="165" width="188" height="108" fill="#fff"/>
<rect x="196" y="165.500" width="36.500" height="18.500" fill="#6c8a7c"/>
<rect x="198" y="168" width="30" height="12" fill="#7d9a8c" opacity=".7"/>
<rect x="196" y="185.700" width="120" height="4.500" fill="#a8242c"/>
<rect x="196" y="185.700" width="8" height="4.500" fill="#24484e"/>
<rect x="204.500" y="185.700" width=".6" height="4.500" fill="#fff"/><rect x="221.500" y="185.700" width=".6" height="4.500" fill="#fff"/><rect x="230.500" y="185.700" width=".6" height="4.500" fill="#fff"/>
<rect x="196" y="191" width="120" height="4" fill="#55686c"/>
<rect x="204" y="192" width="14" height="2" fill="#d0d4d4"/><rect x="222" y="192" width="3" height="2" fill="#e0e0e0"/>
<rect x="204" y="196.800" width="60" height="2.200" fill="#e08888"/>
<g fill="#333"><rect x="206" y="202" width="26" height="1.300"/><rect x="206" y="216" width="20" height="1"/><rect x="206" y="224" width="10" height="1"/><rect x="206" y="238.500" width="18" height="1"/><rect x="206" y="248" width="17" height="1"/><rect x="204" y="259" width="24" height="1"/></g>
<g fill="#5560c0"><rect x="206" y="207" width="34" height="1"/><rect x="206" y="209.500" width="30" height="1"/><rect x="206" y="221.500" width="22" height="1"/><rect x="206" y="226.500" width="6" height="1"/><rect x="206" y="231.500" width="20" height="1"/><rect x="206" y="234" width="14" height="1"/></g>
<rect x="204" y="243.500" width="36" height="1.800" fill="#e08888"/>
<rect x="204" y="243.500" width="36" height="9" fill="none" stroke="#ddd" stroke-width=".5"/>
<rect x="204" y="256.500" width="36" height="8" fill="none" stroke="#ddd" stroke-width=".5"/>
<rect x="196" y="269.500" width="50" height="3.500" fill="#b03030"/>
<!-- photo -->
<rect x="315" y="165.500" width="52" height="21" fill="#5f8574"/>
<rect x="315" y="165.500" width="14" height="21" fill="#8aa08e"/>
<ellipse cx="321" cy="171" rx="3.500" ry="4" fill="#b98e72"/><path d="M316 186.500c0-8 10-8 10 0z" fill="#d8d0c8"/>
<ellipse cx="338" cy="173" rx="5" ry="6" fill="#b07a58"/><path d="M333 170c1-6 10-6 11 0z" fill="#2a1c14"/><path d="M330 186.500c1-7 15-7 16 0z" fill="#c84848"/>
<ellipse cx="357" cy="175" rx="5.500" ry="6.500" fill="#c08a66"/><path d="M351 174c0-10 13-10 13 0 0-4-12-5-13 0z" fill="#2a1c14"/><path d="M349 186.500c1-5 16-5 17 0z" fill="#e8e8e8"/>
<rect x="353" y="186.500" width="14" height="6" fill="#b83a3a"/><rect x="353" y="192.500" width="14" height="4" fill="#3a5a62"/><rect x="353" y="196.500" width="14" height="3" fill="#d87878"/>
</g>

<g id="char" stroke-linejoin="round">
<!-- hair silhouette -->
<path d="M280 92.500C296 93 308 103 313 118C317 130 319 146 317 160C316 168 314 176 311 182L304 190L300 210L286 210L266 240C258 232 251 222 246 210C240 196 235 180 233 165C231 150 233 134 238 122C244 106 260 93 280 92.500Z" fill="#2b2c33" stroke="#050506" stroke-width="2.200"/>
<path d="M236 160c0 20 5 40 14 56M240 135c-3 24 2 56 18 84M246 130c-3 26 4 58 17 84" fill="none" stroke="#484b58" stroke-width=".8"/>
<path d="M314 150c0 14-5 26-12 36" fill="none" stroke="#484b58" stroke-width=".8"/>
<!-- neck -->
<path d="M262 174L264 212L282 238L289 210L295 178Z" fill="#f5d0b2"/>
<path d="M262 176c7 9 25 10 33 1l-1 10c-9 7-23 7-31-1z" fill="#dfa98c"/>
<path d="M264 205l0 32" stroke="#050506" stroke-width="1" />
<!-- shirt -->
<path d="M264 210L263 238L277 273L288 273L288 212L282 226Z" fill="#f4f2f2" stroke="#111" stroke-width=".8"/>
<path d="M277.500 224l3.500 3v10l-3-2.500z" fill="#222"/>
<!-- jacket -->
<path d="M242 208c-8 4-16 10-20 16-1 8 0 18 2 26l6 23h50l-15-35-1-6c-8-8-16-18-22-30z" fill="#8f5c8c" stroke="#0a0a0a" stroke-width="1.600"/>
<path d="M226 230c2 14 5 30 9 43M233 232c3 14 6 28 10 41" fill="none" stroke="#0a0a0a" stroke-width="1.100"/>
<path d="M228 222c4-4 9-7 14-9" fill="none" stroke="#b488b0" stroke-width="1"/>
<!-- face -->
<path d="M253 120C252 132 252 144 254 154C256 164 262 172 270 177C276 181 284 181 290 177C298 172 305 163 308 153C310 144 310 132 309 122Z" fill="#f6d3b5" stroke="#1a1210" stroke-width="1"/>
<path d="M255 152c1 8 6 17 13 23-6-2-12-9-14-18z" fill="#e3b092"/>
<path d="M307 146c0 8-4 16-9 22 6-4 10-12 10-20z" fill="#e9bc9e"/>
<!-- bangs -->
<path d="M252 132C250 118 256 104 266 98C274 93 288 93 296 98C306 104 311 120 310 140L297.500 137C297.500 130 297 124 296 118C296 124 295.500 130 294.500 135.500L290 134C291 126 291 118 290 110C288 118 285 126 281 132C272 129 262 129 252 132Z" fill="#2b2c33"/>
<path d="M290 110C288 118 285 126 281 132L290 134C291 126 291 118 290 110Z" fill="#e9c0a0"/>
<path d="M262 100c-5 8-8 18-8 30M272 96c-6 10-9 22-10 34M284 95c-4 10-8 22-10 34M297 100c3 10 4 22 3 36M304 107c3 10 4 20 4 30" fill="none" stroke="#484b58" stroke-width=".8"/>
<!-- eyes -->
<ellipse cx="265" cy="137.500" rx="6.500" ry="5" fill="#c9a596" opacity=".7"/><ellipse cx="299.500" cy="141" rx="6" ry="4.800" fill="#c9a596" opacity=".7"/>
<ellipse cx="265" cy="138" rx="4.800" ry="3.600" fill="#fff" stroke="#3a2a24" stroke-width=".8"/><circle cx="265.300" cy="138" r="2.500" fill="#66805a"/><circle cx="265.300" cy="138" r="1.100" fill="#1a1a1a"/>
<ellipse cx="299.500" cy="141.500" rx="4.400" ry="3.400" fill="#fff" stroke="#3a2a24" stroke-width=".8"/><circle cx="299.800" cy="141.500" r="2.300" fill="#66805a"/><circle cx="299.800" cy="141.500" r="1" fill="#1a1a1a"/>
<path d="M259 134.500c4-2.500 9-2.500 13 0M294 138.300c4-2.500 8-2.500 11.500 0" stroke="#2a1a18" stroke-width="1.100" fill="none"/>
<ellipse cx="264" cy="147" rx="5" ry="1.500" fill="#fff" opacity=".9"/><ellipse cx="300" cy="150.500" rx="4.500" ry="1.400" fill="#fff" opacity=".9"/>
<!-- glasses -->
<g fill="none" stroke-linejoin="round">
<path d="M250 128L279.500 133.500C279 139 278 144 276 147C272 150.500 260 150 255 147C251.500 143 250.500 136 250 128Z" stroke="#6e6612" stroke-width="3.600"/>
<path d="M288 134.500L314 137.500C314 142 313 147 311 150C307 153.500 297 153 292 150C289 146 288.500 140 288 134.500Z" stroke="#6e6612" stroke-width="3.600"/>
<path d="M279 135.500C282 134.500 285 135 288 136.500" stroke="#6e6612" stroke-width="3.400"/>
<path d="M250 128L279.500 133.500C279 139 278 144 276 147C272 150.500 260 150 255 147C251.500 143 250.500 136 250 128Z" stroke="#e6d620" stroke-width="2.400"/>
<path d="M288 134.500L314 137.500C314 142 313 147 311 150C307 153.500 297 153 292 150C289 146 288.500 140 288 134.500Z" stroke="#e6d620" stroke-width="2.400"/>
<path d="M279 135.500C282 134.500 285 135 288 136.500" stroke="#e6d620" stroke-width="2.400"/>
</g>
<!-- nose -->
<path d="M276 151.500c2 2.500 8 2.500 11 1" fill="none" stroke="#9a6a54" stroke-width=".9"/>
<ellipse cx="282" cy="150" rx="3" ry="1.800" fill="#fbe3cf"/>
<!-- mouth -->
<path d="M266 158.500C270 157 276 156.500 281 157.500C286 156.500 292 156.500 296 158C295 165 289 170 281.500 170C274 170 268 165.500 266 158.500Z" fill="#d8447e" stroke="#6a1838" stroke-width=".7"/>
<path d="M269.500 159.500C277 158.500 286 158.500 293 159.500C291 163.500 286.500 165.500 281.500 165.500C276.500 165.500 272 163.500 269.500 159.500Z" fill="#fff"/>
<path d="M262.500 156c.8 2 2 3 4 3.300M299.500 155.500c-.8 2-2 3-3.500 3.300" stroke="#3a2018" stroke-width=".9" fill="none"/>
<path d="M258 154l1 3M260 153.500l1 3M304 155l-1 3M306 154.500l-1 3" stroke="#6a4030" stroke-width=".6"/>
<path d="M274 174c4 1.500 10 1.500 14 0" stroke="#e9bc9e" stroke-width="1.200" fill="none"/>
<!-- hand -->
<path d="M300 209C299 200 301 191 306 185C310 181 317 180 325 181L344 182C352 183 358 187 362 193C365 198 367 204 367 209Z" fill="#f6d3b5" stroke="#0a0a0a" stroke-width="1.800"/>
<path d="M303 206C304 196 308 188 315 184L310 183C304 188 301 197 301 206Z" fill="#0a0a0a"/>
<path d="M322 208.500l2.500-19M337.500 208.500l1-18M347.500 208.500l0-16M357.500 208.500c0-4-1-8-3-11" fill="none" stroke="#0a0a0a" stroke-width="1.400"/>
<path d="M309 202c0-6 2-11 6-15" stroke="#e3b092" stroke-width="1.500" fill="none"/>
<ellipse cx="360" cy="203.500" rx="2" ry="3" fill="none" stroke="#0a0a0a" stroke-width=".8"/>
</g>
<g id="paper">
<path d="M286 208l97.500 0-5 42 4 80-2 6-11 7.500-90 1 3-44-2-50z" fill="#fdfdfd" stroke="#0a0a0a" stroke-width="2.200" stroke-linejoin="round"/>
<path d="M369 343.500l3-10.500 9 3z" fill="#fff" stroke="#0a0a0a" stroke-width="1.400" stroke-linejoin="round"/>
<path d="M281 300l-2 44 4-4 1-40z" fill="#0a0a0a"/>
<path d="M293 236.500c26-1.500 52-1.500 78 0 1.500.1 2 .8 2 2l-1 27.500c0 1.200-.8 2-2 2-26 1-52 1-76 .3-1.500 0-2.300-.8-2.300-2.300l-.7-27c0-1.500.6-2.400 2-2.500z" fill="#9b1d22"/>
<text x="331.500" y="260.500" text-anchor="middle" font-size="23" font-style="italic" fill="#fff" font-family="DejaVu Sans, Liberation Sans, sans-serif" textLength="66" lengthAdjust="spacingAndGlyphs">eform</text>
<g stroke="#8c8c8c" stroke-width="2.600" stroke-linecap="round">
<path d="M296 280h8M309 280h16"/>
<path d="M294 295.600h14M313 295.600h11M329 295.600h28M364 295.600h5"/>
<path d="M294 303.400h17M317 303.400h5M327 303.400h30"/>
<path d="M314 310.200h43"/>
<path d="M294 322.400h14M313 322.400h11M329 322.400h28M364 321.600h5"/>
<path d="M294 330.800h14M313 330.800h44"/>
</g>
</g>

<g id="rightobj">
<path d="M332 263L497.500 152.500" stroke="#111" stroke-width=".7"/>
<path d="M543 149.300H620" stroke="#111" stroke-width=".7"/>
<!-- cursor markers -->
<path d="M328 261.500l8-2-4.500 7-.5-3.500z" fill="#fff" stroke="#1c7a2c" stroke-width="1"/>
<!-- logo -->
<g fill="none" stroke="#d8283c" stroke-width=".8"><path d="M468 162.500c0-4 2-6.500 4.500-6.500s4.500 2.500 4.500 6.500z"/><path d="M470 162.500c.3-3 1.200-4.500 2.500-4.500s2.200 1.500 2.500 4.500M466.800 162.500c0-2 .8-3.500 2-4.500M478.200 162.500c0-2-.8-3.500-2-4.500"/></g>
<path d="M467 164.600h12M481 164.600h16M467 166.800h9M485 166.800h10" stroke="#2a4ab0" stroke-width=".9" opacity=".85"/>
<!-- small monitor -->
<rect x="507.300" y="150.300" width="40.300" height="25" fill="#fdfdfd"/>
<rect x="506.500" y="175.300" width="41.800" height="3" fill="#c4c4c6"/>
<path d="M524 178.300h7l1 4h-9z" fill="#cfcfd1"/><rect x="521.500" y="182" width="12" height="1.500" fill="#dcdcde"/>
<path d="M522 167l10.500-4.500-3.500 4.500 3.500 4.500z" fill="#d8f0d8" stroke="#147a24" stroke-width="1.500" stroke-linejoin="round"/>
<!-- handles -->
<g fill="#a80c18" stroke="#3a0408" stroke-width=".5"><rect x="495" y="150" width="5.500" height="5.500" transform="rotate(-30 497.700 152.700)"/><rect x="481" y="164.500" width="5" height="5" transform="rotate(-30 483.500 167)"/><rect x="540.500" y="146.500" width="5.500" height="5.500"/></g>
<g fill="#fff"><rect x="496.800" y="151.800" width="1.900" height="1.900"/><rect x="482.700" y="166.200" width="1.700" height="1.700"/><rect x="542.400" y="148.400" width="1.800" height="1.800"/></g>
<!--BLD0-->
<path d="M625.800 114.300L654 123L651 143.500L667.500 148.500L666 152L645 150L619 149L602.500 142.200L598 146.500L620 150Z" fill="#222326"/>
<path d="M602.500 142.200L619.500 148.500L619.500 150L598 146.500Z" fill="#222326"/>
<path d="M598 146.500L619.500 148.800L619.500 183.500L603.400 182.800Z" fill="#f7f7f7"/>
<path d="M645.500 145.300L667.300 149.700L661.600 181L643.700 183.800Z" fill="#fbfbfb"/>
<path d="M618.300 120.700L647.600 127.900L645 150L643.700 183.800L619.500 183.500Z" fill="#fdfdfd"/>
<path d="M603.400 182.800L619.500 183.500L643.700 183.800L661.600 181L661 183C645 186.500 620 186.500 603.800 184.500Z" fill="#e6e6e6"/>
<rect x="622.6" y="131.8" width="2.100" height="5.400" fill="#c87898" opacity=".78"/><rect x="627.0" y="132.3" width="2.100" height="5.400" fill="#78a868" opacity=".78"/><rect x="631.2" y="132.8" width="2.100" height="5.400" fill="#88b8c8" opacity=".78"/><rect x="635.5" y="133.3" width="2.100" height="5.400" fill="#9a78b0" opacity=".78"/><rect x="639.8" y="133.8" width="2.100" height="5.400" fill="#c85a5a" opacity=".78"/><rect x="622.6" y="140.8" width="2.100" height="5.400" fill="#e0b040" opacity=".78"/><rect x="627.0" y="141.3" width="2.100" height="5.400" fill="#d88858" opacity=".78"/><rect x="631.2" y="141.8" width="2.100" height="5.400" fill="#e0b040" opacity=".78"/><rect x="635.5" y="142.3" width="2.100" height="5.400" fill="#c87898" opacity=".78"/><rect x="639.8" y="142.8" width="2.100" height="5.400" fill="#6a6a8a" opacity=".78"/><rect x="622.6" y="149.7" width="2.100" height="5.400" fill="#c85a5a" opacity=".78"/><rect x="627.0" y="150.2" width="2.100" height="5.400" fill="#d88858" opacity=".78"/><rect x="631.2" y="150.7" width="2.100" height="5.400" fill="#5888b8" opacity=".78"/><rect x="635.5" y="151.2" width="2.100" height="5.400" fill="#c85a5a" opacity=".78"/><rect x="639.8" y="151.7" width="2.100" height="5.400" fill="#e0b040" opacity=".78"/><rect x="622.6" y="157.8" width="2.100" height="5.400" fill="#88b8c8" opacity=".78"/><rect x="627.0" y="158.3" width="2.100" height="5.400" fill="#88b8c8" opacity=".78"/><rect x="631.2" y="158.8" width="2.100" height="5.400" fill="#e0b040" opacity=".78"/><rect x="635.5" y="159.3" width="2.100" height="5.400" fill="#5888b8" opacity=".78"/><rect x="639.8" y="159.8" width="2.100" height="5.400" fill="#e0b040" opacity=".78"/><rect x="622.6" y="165.8" width="2.100" height="5.400" fill="#d88858" opacity=".78"/><rect x="627.0" y="166.3" width="2.100" height="5.400" fill="#88b8c8" opacity=".78"/><rect x="631.2" y="166.8" width="2.100" height="5.400" fill="#c85a5a" opacity=".78"/><rect x="635.5" y="167.3" width="2.100" height="5.400" fill="#6a6a8a" opacity=".78"/><rect x="639.8" y="167.8" width="2.100" height="5.400" fill="#e0b040" opacity=".78"/><rect x="602.4" y="152.5" width="2.100" height="5" fill="#5888b8" opacity=".78"/><rect x="606.9" y="152.8" width="2.100" height="5" fill="#9a78b0" opacity=".78"/><rect x="611.4" y="153.1" width="2.100" height="5" fill="#9a78b0" opacity=".78"/><rect x="615.8" y="153.4" width="2.100" height="5" fill="#6a6a8a" opacity=".78"/><rect x="602.8" y="159.8" width="2.100" height="5" fill="#c85a5a" opacity=".78"/><rect x="607.3" y="160.1" width="2.100" height="5" fill="#6a6a8a" opacity=".78"/><rect x="611.8" y="160.4" width="2.100" height="5" fill="#6a6a8a" opacity=".78"/><rect x="616.2" y="160.7" width="2.100" height="5" fill="#88b8c8" opacity=".78"/><rect x="603.3" y="167.5" width="2.100" height="5" fill="#c85a5a" opacity=".78"/><rect x="607.8" y="167.8" width="2.100" height="5" fill="#5888b8" opacity=".78"/><rect x="612.3" y="168.1" width="2.100" height="5" fill="#c85a5a" opacity=".78"/><rect x="616.7" y="168.4" width="2.100" height="5" fill="#d88858" opacity=".78"/><rect x="603.8" y="175.0" width="2.100" height="5" fill="#78a868" opacity=".78"/><rect x="608.2" y="175.3" width="2.100" height="5" fill="#e6d850" opacity=".78"/><rect x="612.8" y="175.6" width="2.100" height="5" fill="#88b8c8" opacity=".78"/><rect x="617.1" y="175.9" width="2.100" height="5" fill="#78a868" opacity=".78"/><rect x="646.2" y="151.2" width="2.100" height="5" fill="#d88858" opacity=".78"/><rect x="650.7" y="151.6" width="2.100" height="5" fill="#e0b040" opacity=".78"/><rect x="654.8" y="152.0" width="2.100" height="5" fill="#6a6a8a" opacity=".78"/><rect x="659.0" y="152.4" width="2.100" height="5" fill="#e6d850" opacity=".78"/><rect x="645.8" y="159.5" width="2.100" height="5" fill="#d88858" opacity=".78"/><rect x="650.3" y="159.9" width="2.100" height="5" fill="#9a78b0" opacity=".78"/><rect x="654.4" y="160.3" width="2.100" height="5" fill="#78a868" opacity=".78"/><rect x="658.6" y="160.7" width="2.100" height="5" fill="#e0b040" opacity=".78"/><rect x="645.4" y="166.9" width="2.100" height="5" fill="#6a6a8a" opacity=".78"/><rect x="649.9" y="167.3" width="2.100" height="5" fill="#6a6a8a" opacity=".78"/><rect x="654.0" y="167.7" width="2.100" height="5" fill="#9a78b0" opacity=".78"/><rect x="658.2" y="168.1" width="2.100" height="5" fill="#5888b8" opacity=".78"/><rect x="645.0" y="174.5" width="2.100" height="5" fill="#c87898" opacity=".78"/><rect x="649.5" y="174.9" width="2.100" height="5" fill="#e0b040" opacity=".78"/><rect x="653.6" y="175.3" width="2.100" height="5" fill="#d88858" opacity=".78"/><rect x="657.8" y="175.7" width="2.100" height="5" fill="#e8e0a0" opacity=".78"/>
<path d="M625.500 183.700v-4.500h11.500v4.500M628 179.200v4.500M634.500 179.200v4.500M624.800 179.200l6.500-3.500 6.500 3.500" fill="none" stroke="#e8b040" stroke-width=".7"/>
<path d="M629 149l10.500-4.500-3 4.500 3.500 4.500z" fill="#fff" stroke="#1c8a2c" stroke-width="1.300" stroke-linejoin="round"/>
<!--BLD1-->
</g>

</svg>


<!--RIGHTPANEL-->
<div class="abs" id="rpanel" style="left:674px;top:55px;width:126px;height:421px;background:#f0f1f6;border-left:1px solid #70737c"></div>
<div class="abs" style="left:678.300px;top:61.300px;width:11px;height:9.400px;background:#fff;border:2.200px solid #2f7fc6"></div>
<div class="abs" style="left:693.500px;top:61px;width:86px;height:9px;background:#fff;border:1px solid #d4d6de"></div>
<div class="t" style="left:695.500px;top:63px;font-size:5.300px;color:#2a2c36">Overview of Registration</div>
<svg class="abs" style="left:786px;top:62px" width="9" height="7" viewBox="0 0 9 7"><path d="M2.500 1.200h5.500M2.500 3.400h5.500M2.500 5.600h5.500" stroke="#5a5c6a" stroke-width=".55"/><path d="M0 .4l1.600.8-1.600.8z" fill="#5a5c6a"/></svg>
<div class="t" style="left:737.500px;top:74.500px;font-size:5.300px;color:#4a4c5a;transform:translateX(-50%)">Master Slide</div>
<div class="abs" style="left:717.500px;top:82.500px;width:40px;height:30.500px;background:#4a90d8"></div>
<div class="abs" style="left:718.500px;top:83px;width:39px;height:29.300px;background:#464646;overflow:hidden"><div class="abs" style="left:0;top:0;width:39px;height:1.400px;background:#0a0a0a"></div><div class="abs" style="left:6px;top:8px;width:22px;height:16px;border-radius:50%;background:radial-gradient(ellipse,rgba(120,120,120,.35),rgba(90,90,90,0) 70%)"></div></div>
<svg class="abs" style="left:760px;top:96px" width="6" height="5" viewBox="0 0 6 5"><path d="M.8 .8h4.400l-2.200 3z" fill="#2f7fd8"/></svg>
<div class="t" style="left:737px;top:115.800px;font-size:5.300px;font-weight:bold;color:#2a2c36;transform:translateX(-50%)">Main Content</div>
<div class="abs" style="left:706.300px;top:125px;width:62.500px;height:8px;background:#fbfbfd;border:1px solid #c6c8d2"></div>
<div class="t" style="left:737.500px;top:126.800px;font-size:5px;color:#3a3c48;transform:translateX(-50%)">Reset Master Slide</div>
<div class="abs" style="left:706.300px;top:138px;width:62.500px;height:8.300px;background:#fbfbfd;border:1px solid #c6c8d2"></div>
<div class="t" style="left:737.500px;top:140px;font-size:5px;color:#3a3c48;transform:translateX(-50%)">Master slide view</div>
<div class="abs" style="left:675px;top:158.500px;width:125px;height:1px;background:#d8dae2"></div>
<div class="abs" style="left:678.400px;top:153px;width:117.300px;height:9.500px;background:#d8ddee;border:1px solid #b8bfd8"></div>
<div class="abs" style="left:678.400px;top:153px;width:38.500px;height:9.500px;background:#4b5573"></div>
<div class="t" style="left:698.500px;top:155.800px;font-size:5px;color:#fff;transform:translateX(-50%)">Style</div>
<div class="t" style="left:737px;top:155.800px;font-size:5px;color:#2a2c36;transform:translateX(-50%)">Actions</div>
<div class="t" style="left:776.500px;top:155.800px;font-size:5px;color:#2a2c36;transform:translateX(-50%)">Options</div>
<svg class="abs" style="left:795.500px;top:166px" width="5" height="4" viewBox="0 0 5 4"><path d="M.8 3h3l-1.500-2.200z" fill="#5a5c6a"/></svg>
<div class="abs" style="left:678.400px;top:169.200px;width:4.400px;height:4.400px;background:#d2d2d2;border:.600px solid #b0b0b0"></div>
<div class="t" style="left:685px;top:169.400px;font-size:4.800px;color:#b4b6c2">Allow Gesture Navigation</div>
<div class="t" style="left:677.500px;top:180.500px;font-size:4.800px;color:#2f3140">Background</div>
<div class="abs" style="left:677.700px;top:188.400px;width:114px;height:9px;background:#fff;border:1px solid #9a9cab"></div>
<div class="t" style="left:680.500px;top:190.900px;font-size:4.800px;color:#2a2c36">Master Slide Background</div>
<svg class="abs" style="left:785.500px;top:192px" width="5" height="4" viewBox="0 0 5 4"><path d="M.6 .5h3.800l-1.900 2.600z" fill="#4a4c5a"/></svg>
<div class="t" style="left:677.500px;top:203px;font-size:4.800px;color:#2f3140">Quality</div>
<div class="abs" style="left:677.700px;top:210.600px;width:114px;height:8.800px;background:#fff;border:1px solid #b4b6c4"></div>
<div class="t" style="left:680.500px;top:213px;font-size:4.800px;color:#2a2c36">Low (8-bit)</div>
<svg class="abs" style="left:785.500px;top:214.200px" width="5" height="4" viewBox="0 0 5 4"><path d="M.6 .5h3.800l-1.900 2.600z" fill="#4a4c5a"/></svg>
<div class="abs" style="left:678.400px;top:223.800px;width:4.600px;height:4.800px;background:#fff;border:.600px solid #80838c"></div>
<div class="t" style="left:685px;top:224.300px;font-size:4.800px;color:#3a3c48">Master Slide Objects On Top</div>
<div class="abs" style="left:796px;top:470px;width:2px;height:2px;background:#8a8c94"></div>

<!--TIMELINE-->
<div class="abs" style="left:70px;top:393px;width:604px;height:8px;background:#f1f1f1"></div>
<div class="abs" style="left:266px;top:393.500px;width:207px;height:6.500px;background:#cdcdcd"></div>
<svg class="abs" style="left:71px;top:394px" width="5" height="6" viewBox="0 0 5 6"><path d="M3.400 1l-2 2 2 2" fill="none" stroke="#222" stroke-width=".8"/></svg>
<svg class="abs" style="left:660.500px;top:394px" width="5" height="6" viewBox="0 0 5 6"><path d="M1.600 1l2 2-2 2" fill="none" stroke="#222" stroke-width=".8"/></svg>
<div class="abs" style="left:70px;top:400.500px;width:604px;height:1px;background:#c6c7cc"></div>
<div class="abs" id="tlpanel" style="left:70px;top:401.500px;width:604px;height:74.500px;background:#f0f1f6"></div>
<div class="abs" style="left:674px;top:393px;width:1px;height:83px;background:#8a8c94"></div>
<div class="t" style="left:372.500px;top:403.500px;font-size:4.200px;font-weight:bold;color:#2f3140;transform:translateX(-50%)">TIMELINE</div>
<div class="abs" style="left:70px;top:410px;width:604px;height:1px;background:#7a7c86"></div>
<!-- ruler -->
<div class="abs" style="left:164px;top:411px;width:495px;height:7px;background:#f0f0f1"></div>
<svg class="abs" style="left:164px;top:411px" width="495" height="7" viewBox="0 0 495 7"><rect x="0.0" y="0" width=".8" height="7" fill="#555"/><text x="2.5" y="3.600" font-size="3.200" fill="#333" font-family="Liberation Sans, sans-serif">00:00</text><rect x="14.7" y="4.500" width=".7" height="2.500" fill="#555"/><rect x="7.3" y="5.800" width=".6" height="1.200" fill="#666"/><rect x="22.0" y="5.800" width=".6" height="1.200" fill="#666"/><rect x="29.3" y="0" width=".8" height="7" fill="#555"/><text x="31.8" y="3.600" font-size="3.200" fill="#333" font-family="Liberation Sans, sans-serif">00:02</text><rect x="44.0" y="4.500" width=".7" height="2.500" fill="#555"/><rect x="36.6" y="5.800" width=".6" height="1.200" fill="#666"/><rect x="51.3" y="5.800" width=".6" height="1.200" fill="#666"/><rect x="58.6" y="0" width=".8" height="7" fill="#555"/><text x="61.1" y="3.600" font-size="3.200" fill="#333" font-family="Liberation Sans, sans-serif">00:04</text><rect x="73.2" y="4.500" width=".7" height="2.500" fill="#555"/><rect x="65.9" y="5.800" width=".6" height="1.200" fill="#666"/><rect x="80.6" y="5.800" width=".6" height="1.200" fill="#666"/><rect x="87.9" y="0" width=".8" height="7" fill="#555"/><text x="90.4" y="3.600" font-size="3.200" fill="#333" font-family="Liberation Sans, sans-serif">00:06</text><rect x="102.6" y="4.500" width=".7" height="2.500" fill="#555"/><rect x="95.2" y="5.800" width=".6" height="1.200" fill="#666"/><rect x="109.9" y="5.800" width=".6" height="1.200" fill="#666"/><rect x="117.2" y="0" width=".8" height="7" fill="#555"/><text x="119.7" y="3.600" font-size="3.200" fill="#333" font-family="Liberation Sans, sans-serif">00:08</text><rect x="131.8" y="4.500" width=".7" height="2.500" fill="#555"/><rect x="124.5" y="5.800" width=".6" height="1.200" fill="#666"/><rect x="139.2" y="5.800" width=".6" height="1.200" fill="#666"/><rect x="146.5" y="0" width=".8" height="7" fill="#555"/><text x="149.0" y="3.600" font-size="3.200" fill="#333" font-family="Liberation Sans, sans-serif">00:10</text><rect x="161.2" y="4.500" width=".7" height="2.500" fill="#555"/><rect x="153.8" y="5.800" width=".6" height="1.200" fill="#666"/><rect x="168.5" y="5.800" width=".6" height="1.200" fill="#666"/><rect x="175.8" y="0" width=".8" height="7" fill="#555"/><text x="178.3" y="3.600" font-size="3.200" fill="#333" font-family="Liberation Sans, sans-serif">00:12</text><rect x="190.5" y="4.500" width=".7" height="2.500" fill="#555"/><rect x="183.1" y="5.800" width=".6" height="1.200" fill="#666"/><rect x="197.8" y="5.800" width=".6" height="1.200" fill="#666"/><rect x="205.1" y="0" width=".8" height="7" fill="#555"/><text x="207.6" y="3.600" font-size="3.200" fill="#333" font-family="Liberation Sans, sans-serif">00:14</text><rect x="219.8" y="4.500" width=".7" height="2.500" fill="#555"/><rect x="212.4" y="5.800" width=".6" height="1.200" fill="#666"/><rect x="227.1" y="5.800" width=".6" height="1.200" fill="#666"/><rect x="234.4" y="0" width=".8" height="7" fill="#555"/><text x="236.9" y="3.600" font-size="3.200" fill="#333" font-family="Liberation Sans, sans-serif">00:16</text><rect x="249.1" y="4.500" width=".7" height="2.500" fill="#555"/><rect x="241.7" y="5.800" width=".6" height="1.200" fill="#666"/><rect x="256.4" y="5.800" width=".6" height="1.200" fill="#666"/><rect x="263.7" y="0" width=".8" height="7" fill="#555"/><text x="266.2" y="3.600" font-size="3.200" fill="#333" font-family="Liberation Sans, sans-serif">00:18</text><rect x="278.4" y="4.500" width=".7" height="2.500" fill="#555"/><rect x="271.0" y="5.800" width=".6" height="1.200" fill="#666"/><rect x="285.7" y="5.800" width=".6" height="1.200" fill="#666"/><rect x="293.0" y="0" width=".8" height="7" fill="#555"/><text x="295.5" y="3.600" font-size="3.200" fill="#333" font-family="Liberation Sans, sans-serif">00:20</text><rect x="307.7" y="4.500" width=".7" height="2.500" fill="#555"/><rect x="300.3" y="5.800" width=".6" height="1.200" fill="#666"/><rect x="315.0" y="5.800" width=".6" height="1.200" fill="#666"/><rect x="322.3" y="0" width=".8" height="7" fill="#555"/><text x="324.8" y="3.600" font-size="3.200" fill="#333" font-family="Liberation Sans, sans-serif">00:22</text><rect x="337.0" y="4.500" width=".7" height="2.500" fill="#555"/><rect x="329.6" y="5.800" width=".6" height="1.200" fill="#666"/><rect x="344.3" y="5.800" width=".6" height="1.200" fill="#666"/><rect x="351.6" y="0" width=".8" height="7" fill="#555"/><text x="354.1" y="3.600" font-size="3.200" fill="#333" font-family="Liberation Sans, sans-serif">00:24</text><rect x="366.3" y="4.500" width=".7" height="2.500" fill="#555"/><rect x="358.9" y="5.800" width=".6" height="1.200" fill="#666"/><rect x="373.6" y="5.800" width=".6" height="1.200" fill="#666"/><rect x="380.9" y="0" width=".8" height="7" fill="#555"/><text x="383.4" y="3.600" font-size="3.200" fill="#333" font-family="Liberation Sans, sans-serif">00:26</text><rect x="395.6" y="4.500" width=".7" height="2.500" fill="#555"/><rect x="388.2" y="5.800" width=".6" height="1.200" fill="#666"/><rect x="402.9" y="5.800" width=".6" height="1.200" fill="#666"/><rect x="410.2" y="0" width=".8" height="7" fill="#555"/><text x="412.7" y="3.600" font-size="3.200" fill="#333" font-family="Liberation Sans, sans-serif">00:28</text><rect x="424.9" y="4.500" width=".7" height="2.500" fill="#555"/><rect x="417.5" y="5.800" width=".6" height="1.200" fill="#666"/><rect x="432.2" y="5.800" width=".6" height="1.200" fill="#666"/><rect x="439.5" y="0" width=".8" height="7" fill="#555"/><text x="442.0" y="3.600" font-size="3.200" fill="#333" font-family="Liberation Sans, sans-serif">00:30</text><rect x="454.2" y="4.500" width=".7" height="2.500" fill="#555"/><rect x="446.8" y="5.800" width=".6" height="1.200" fill="#666"/><rect x="461.5" y="5.800" width=".6" height="1.200" fill="#666"/><rect x="468.8" y="0" width=".8" height="7" fill="#555"/><text x="471.3" y="3.600" font-size="3.200" fill="#333" font-family="Liberation Sans, sans-serif">00:32</text><rect x="483.5" y="4.500" width=".7" height="2.500" fill="#555"/><rect x="476.1" y="5.800" width=".6" height="1.200" fill="#666"/><rect x="490.8" y="5.800" width=".6" height="1.200" fill="#666"/></svg>
<!-- tracks -->
<div class="abs" style="left:164px;top:418px;width:495px;height:44.500px;background:#5c5f69"></div>
<div class="abs" style="left:164px;top:426px;width:495px;height:1px;background:#50535c"></div>
<div class="abs" style="left:164px;top:435px;width:495px;height:1px;background:#565962"></div>
<div class="abs" style="left:164px;top:444px;width:495px;height:1.500px;background:#6b6e78"></div>
<div class="abs" style="left:164px;top:453px;width:495px;height:1px;background:#50535c"></div>
<div class="abs" style="left:164px;top:462px;width:495px;height:5.500px;background:#5c5f69;border-top:1px solid #50535c"></div>
<div class="abs" style="left:424px;top:462.500px;width:235px;height:5px;background:#bfe6f9"></div>
<div class="t" style="left:432px;top:463.300px;font-size:3.600px;color:#3a5a78">eform destination for the rest of the slide</div>
<div class="abs" style="left:427px;top:463.500px;width:2.500px;height:2.500px;border-radius:50%;border:.600px solid #4a80c0"></div>
<div class="abs" style="left:386.500px;top:418px;width:2.500px;height:8px;background:#bfe6f9"></div>
<div class="abs" style="left:301.500px;top:427.500px;width:2.500px;height:16.500px;background:#bfe6f9"></div>
<div class="abs" style="left:228px;top:445px;width:2.500px;height:17.500px;background:#bfe6f9"></div>
<div class="abs" style="left:163px;top:411px;width:2.200px;height:7.500px;background:#e0202a"></div>
<div class="abs" style="left:163.500px;top:418px;width:1px;height:49px;background:#8a3038"></div>
<div class="abs" style="left:659px;top:411px;width:7px;height:56.500px;background:#3d3f47"></div>
<div class="abs" style="left:659px;top:411px;width:3px;height:7px;background:#77797f"></div>
<div class="abs" style="left:661.500px;top:421.500px;width:1.600px;height:1.600px;background:#c8b060"></div>
<!-- scrollbar -->
<div class="abs" style="left:667.800px;top:437px;width:3.600px;height:8px;background:#9a9cac"></div>
<svg class="abs" style="left:658px;top:418px" width="16" height="56" viewBox="658 418 16 56"><g fill="#4a5682"><path d="M668.200 422.300l1.500-2 1.500 2z"/><path d="M668.200 463l1.500 2 1.500-2z"/><path d="M662.300 468.800l2 1.400-2 1.400z"/></g></svg>
<!-- layer list -->
<svg class="abs" style="left:142px;top:411.500px" width="20" height="7" viewBox="0 0 20 7"><ellipse cx="4.300" cy="3.500" rx="3.200" ry="1.700" fill="#fff" stroke="#2f7fd8" stroke-width=".7"/><circle cx="4.300" cy="3.500" r="1" fill="#2f7fd8"/><rect x="11.300" y="3" width="3.600" height="3" fill="#2f7fd8"/><path d="M12 3v-1c0-1.300 2.200-1.300 2.200 0v1" fill="none" stroke="#2f7fd8" stroke-width=".7"/></svg>
<svg class="abs" style="left:80px;top:419px" width="7" height="7" viewBox="0 0 7 7"><path d="M3.500 .4l.9 2 2.200.2-1.700 1.400.6 2.200-2-1.200-2 1.200.6-2.200-1.700-1.400 2.200-.2z" fill="#f0b418"/></svg><div class="t" style="left:90.500px;top:420.9px;font-size:4.800px;color:#3a3c48">Oval_48</div><div class="t" style="left:143.500px;top:418.3px;font-size:7.600px;font-weight:bold;color:#e01828">×</div><div class="abs" style="left:154px;top:422px;width:2px;height:2px;background:#b09a30;border-radius:.4px"></div>
<svg class="abs" style="left:80px;top:428px" width="7" height="7" viewBox="0 0 7 7"><path d="M3.500 .4l.9 2 2.200.2-1.700 1.400.6 2.200-2-1.200-2 1.200.6-2.200-1.700-1.400 2.200-.2z" fill="#f0b418"/></svg><div class="t" style="left:90.500px;top:429.9px;font-size:4.800px;color:#3a3c48">Oval_47</div><div class="t" style="left:143.500px;top:427.3px;font-size:7.600px;font-weight:bold;color:#e01828">×</div><div class="abs" style="left:154px;top:431px;width:2px;height:2px;background:#b09a30;border-radius:.4px"></div>
<svg class="abs" style="left:80px;top:436.7px" width="7" height="7" viewBox="0 0 7 7"><path d="M3.500 .4l.9 2 2.200.2-1.700 1.400.6 2.200-2-1.200-2 1.200.6-2.200-1.700-1.400 2.200-.2z" fill="#f0b418"/></svg><div class="t" style="left:90.500px;top:438.6px;font-size:4.800px;color:#3a3c48">Oval_16</div><div class="t" style="left:143.500px;top:436.0px;font-size:7.600px;font-weight:bold;color:#e01828">×</div><div class="abs" style="left:154px;top:440px;width:2px;height:2px;background:#b09a30;border-radius:.4px"></div>
<svg class="abs" style="left:80px;top:445.5px" width="7" height="7" viewBox="0 0 7 7"><path d="M3.500 .4l.9 2 2.200.2-1.700 1.400.6 2.200-2-1.200-2 1.200.6-2.200-1.700-1.400 2.200-.2z" fill="#f0b418"/></svg><div class="t" style="left:90.500px;top:447.4px;font-size:4.800px;color:#3a3c48">Oval_45</div><div class="t" style="left:143.500px;top:444.8px;font-size:7.600px;font-weight:bold;color:#e01828">×</div><div class="abs" style="left:154px;top:448px;width:2px;height:2px;background:#b09a30;border-radius:.4px"></div>
<svg class="abs" style="left:80px;top:454.3px" width="7" height="7" viewBox="0 0 7 7"><path d="M3.500 .4l.9 2 2.200.2-1.700 1.400.6 2.200-2-1.200-2 1.200.6-2.200-1.700-1.400 2.200-.2z" fill="#f0b418"/></svg><div class="t" style="left:90.500px;top:456.2px;font-size:4.800px;color:#3a3c48">Oval_44</div><div class="t" style="left:143.500px;top:453.6px;font-size:7.600px;font-weight:bold;color:#e01828">×</div><div class="abs" style="left:154px;top:457px;width:2px;height:2px;background:#b09a30;border-radius:.4px"></div>
<div class="abs" style="left:71px;top:426.3px;width:92px;height:1px;background:#b2b4be"></div>
<div class="abs" style="left:71px;top:435.5px;width:92px;height:1px;background:#b2b4be"></div>
<div class="abs" style="left:71px;top:453px;width:92px;height:1px;background:#b2b4be"></div>
<div class="abs" style="left:71px;top:462px;width:92px;height:1px;background:#b2b4be"></div>
<div class="abs" style="left:70px;top:462.500px;width:93px;height:5px;overflow:hidden"><div class="abs" style="left:3px;top:1.500px;border-top:1.500px solid transparent;border-bottom:1.500px solid transparent;border-left:2px solid #2a2c36"></div><div class="abs" style="left:10.500px;top:1px;width:5px;height:4px;background:#2f6fd0"></div><div class="t" style="left:20.500px;top:1px;font-size:4.800px;color:#4a5aa0">Image_1787</div><div class="abs" style="left:75.500px;top:3.500px;width:1.600px;height:1.600px;background:#98a840"></div><div class="abs" style="left:84.300px;top:3.500px;width:1.600px;height:1.600px;background:#b09a30"></div></div>
<svg class="abs" style="left:120px;top:467px" width="180" height="8" viewBox="0 0 180 8">
<g fill="#8fb0e8"><rect x="3" y="2.200" width=".8" height="3.600"/><path d="M7 2.200v3.600l-2.800-1.800z"/><rect x="11.800" y="2.700" width="2.400" height="2.600"/></g>
<g fill="#2f6fd8"><path d="M19.500 2v4l3.200-2z"/><path d="M28 2.200v3.600l2.800-1.800z"/><rect x="31.200" y="2.200" width=".9" height="3.600"/><path d="M36 3.200h1.200l1.600-1.400v4.400l-1.600-1.400h-1.200z"/><path d="M39.600 2.500c.9.800.9 2.200 0 3" stroke="#2f6fd8" stroke-width=".6" fill="none"/></g>
<g fill="#2f6fd8"><path d="M45 2h1.600v1.500h1v3h-2.600z"/><rect x="65" y="2" width=".8" height="4.500"/><path d="M66 4.200h3" stroke="#2f6fd8" stroke-width=".9"/><rect x="84.500" y="2" width=".8" height="4.500"/><path d="M85.500 4.200h2.200" stroke="#2f6fd8" stroke-width=".9"/><rect x="88" y="2" width=".8" height="4.500"/><circle cx="107.500" cy="4.300" r="1.900"/></g>
<path d="M130 4.800h36" stroke="#9a9cac" stroke-width=".8"/><path d="M164.500 6.300l1.800-3.300 1.800 3.300z" fill="#fff" stroke="#8a8c98" stroke-width=".5"/><path d="M173.500 2.500v3.400l-2.400-1.700z" fill="#4a5682"/>
</svg>
<div class="t" style="left:170px;top:468.500px;font-size:4.200px;color:#3a3c48">0.0s</div>
<div class="t" style="left:190.500px;top:468.500px;font-size:4.200px;color:#3a3c48">—</div>
<div class="t" style="left:211px;top:468.500px;font-size:4.200px;color:#3a3c48">—</div>
<div class="t" style="left:231.500px;top:468.500px;font-size:4.200px;color:#3a3c48">56.0s</div>

<!--STATUS-->
<div class="abs" id="status" style="left:0;top:476px;width:800px;height:10px;background:#22252c"></div>
<div class="t" style="left:1.500px;top:477.800px;font-size:4.400px;color:#dcdde4">C:\Users\HerttE\Dropbox (BCS)\Republishthethemeversion\module 3c.cptx</div>
<div class="abs" style="left:704.500px;top:477px;width:1px;height:8.500px;background:#5a5c66"></div>
<div class="abs" style="left:747.300px;top:477px;width:1px;height:8.500px;background:#5a5c66"></div>
<div class="t" style="left:710px;top:477.800px;font-size:4.400px;color:#dcdde4">Filmstrip View</div>
<div class="t" style="left:750.500px;top:477.800px;font-size:4.400px;color:#dcdde4">1024 x 650</div>

<!--TASKBAR-->
<div class="abs" id="taskbar" style="left:0;top:486px;width:800px;height:17px;background:#4b4a15"></div>
<svg class="abs" style="left:5px;top:490.500px" width="9" height="9" viewBox="0 0 9 9"><path d="M0 1.200l3.700-.5v3.500h-3.700zM4.200.6l4.600-.6v4.200h-4.600zM0 4.700h3.700v3.500l-3.700-.5zM4.200 4.700h4.600v4.200l-4.600-.6z" fill="#fff"/></svg>
<div class="abs" style="left:19px;top:486.500px;width:143px;height:16.500px;background:#f3f2ee"></div>
<div class="abs" style="left:24px;top:491.300px;width:7px;height:7px;border-radius:50%;border:1.100px solid #222"></div>
<div class="t" style="left:35.500px;top:492px;font-size:6px;color:#444">Type here to search</div>
<svg class="abs" style="left:150px;top:490px" width="7" height="9" viewBox="0 0 7 9"><rect x="2.300" y=".5" width="2.400" height="4.600" rx="1.200" fill="#222"/><path d="M1 4c0 3.200 5 3.200 5 0M3.500 6.500v1.800" stroke="#222" stroke-width=".7" fill="none"/></svg>
<div class="abs" style="left:327.500px;top:486px;width:20px;height:17px;background:#7c7b2e"></div>
<svg class="abs" style="left:160px;top:486px" width="200" height="17" viewBox="160 486 200 17">
<g fill="#e8e8b0"><rect x="206" y="501.500" width="16" height="1.500"/><rect x="225.500" y="501.500" width="17.500" height="1.500"/><rect x="266.500" y="501.500" width="17.500" height="1.500"/><rect x="289" y="501.500" width="17" height="1.500"/><rect x="310" y="501.500" width="15" height="1.500"/><rect x="327.500" y="501.500" width="20" height="1.500"/></g>
<!-- task view -->
<g fill="none" stroke="#e8e8e0" stroke-width=".8"><rect x="169.500" y="491.500" width="5" height="6"/><path d="M168 492.500v4M176 492.500v4"/><rect x="174.500" y="491.500" width="2" height="2.500" stroke-width=".6"/></g>
<!-- IE -->
<circle cx="193.500" cy="495" r="3.400" fill="none" stroke="#28b8f0" stroke-width="1.800"/><rect x="190.500" y="494.300" width="6.500" height="1.300" fill="#28b8f0"/><rect x="194.500" y="495.600" width="3" height="1.800" fill="#4b4a15"/>
<path d="M188.800 498.500c-1.500-4 4-9 9-8" fill="none" stroke="#f0c830" stroke-width=".9"/>
<!-- explorer -->
<path d="M209 490.500h4l1 1.200h5.500v7.300h-10.500z" fill="#f8d468"/><rect x="209" y="493.500" width="10.500" height="5.500" fill="#fbe08a"/><rect x="211.500" y="495.500" width="5.500" height="3.500" fill="#58a8e8"/>
<!-- chrome -->
<circle cx="234.500" cy="494.500" r="4.600" fill="#e8483a"/><path d="M234.500 494.500L230.500 492.200A4.600 4.600 0 0 0 234.900 499.100Z" fill="#38a858"/><path d="M234.500 494.500L234.900 499.100A4.600 4.600 0 0 0 238.900 493Z" fill="#f8c828"/><path d="M234.500 494.500L238.900 493A4.600 4.600 0 0 0 230.500 492.200Z" fill="#e8483a"/><circle cx="234.500" cy="494.500" r="2.100" fill="#fff"/><circle cx="234.500" cy="494.500" r="1.600" fill="#4888f0"/>
<!-- filezilla -->
<rect x="250.300" y="489.800" width="9.600" height="9.600" rx="1" fill="#b8121c"/>
<!-- snip -->
<rect x="270.500" y="490" width="8" height="9" fill="#e8ecf4"/><rect x="270.500" y="490" width="4.500" height="5" fill="#3050b0"/><path d="M272 498l6-6" stroke="#c82030" stroke-width=".9"/><path d="M273 492l2 3 2-3" stroke="#fff" stroke-width=".6" fill="none"/>
<!-- word -->
<rect x="291" y="490.500" width="6.500" height="8.500" fill="#2b579a"/><rect x="296" y="491.500" width="4.500" height="6.500" fill="#e8ecf4"/><path d="M297 493h3M297 494.500h3M297 496h3" stroke="#2b579a" stroke-width=".5"/>
<!-- outlook -->
<rect x="311" y="490.500" width="6.500" height="8.500" fill="#0a72c8"/><rect x="316" y="492" width="5" height="5.500" fill="#e8f0f8"/><path d="M316 492l2.500 2.200 2.500-2.200" stroke="#0a72c8" stroke-width=".5" fill="none"/>
<!-- cp -->
<rect x="332.500" y="490.300" width="9.500" height="8.600" rx=".8" fill="#0c2c10" stroke="#10c848" stroke-width=".9"/>
</svg>
<div class="t" style="left:251.300px;top:491.300px;font-size:6.500px;font-weight:bold;font-style:italic;color:#fff;letter-spacing:-.4px">Fz</div>
<div class="t" style="left:292px;top:492.300px;font-size:5px;font-weight:bold;color:#fff">W</div>
<div class="t" style="left:312.300px;top:492.300px;font-size:5px;font-weight:bold;color:#fff">O</div>
<div class="t" style="left:334px;top:492.300px;font-size:5px;font-weight:bold;color:#10c848">Cp</div>
<!-- tray -->
<svg class="abs" style="left:645px;top:486px" width="155" height="17" viewBox="645 486 155 17">
<g fill="none" stroke="#e8e8e0" stroke-width=".7">
<circle cx="654" cy="491.800" r="1.100"/><path d="M652 496c0-2.500 4-2.500 4 0"/><circle cx="650.500" cy="494" r=".9"/><path d="M649 498v-1.500c0-1.500 3-1.500 3 0v1.500"/>
<path d="M665 496l2.300-2.300 2.300 2.300"/>
<rect x="694" y="492.500" width="5.500" height="3" fill="#e8e8e0"/><path d="M700 493.500v1.200"/>
<path d="M704.500 497c1.500-3 4-4.500 6-4.500M705.500 497.500c1-2 2.500-3 4.500-3M707.500 497.500c.5-.8 1.200-1.300 2-1.300"/><path d="M704.500 498l5-6"/>
<path d="M714.500 493.500h1.200l1.600-1.400v5l-1.600-1.400h-1.200z" fill="#e8e8e0" stroke="none"/><path d="M718.500 492.500c1 1 1 3 0 4M720 491.500c1.500 1.500 1.500 4.500 0 6"/>
<rect x="727" y="494.500" width="3" height="2.500"/><rect x="730" y="491.500" width="3" height="2.500"/><path d="M729.500 494.500l1.500-1"/>
<path d="M785 491h8v5.500h-4.500l-2 1.800v-1.800h-1.500z"/><path d="M786.500 492.800h5M786.500 494.500h5"/>
</g>
<path d="M674.500 491.500l5 1.500-1 5-5-1.500z" fill="#78d830"/><path d="M674.500 491.500l3-.8 2 2.300z" fill="#48a818"/>
<rect x="684.500" y="491" width="3" height="4.500" fill="#e8e8e0"/><circle cx="688" cy="496.300" r="1.600" fill="#2878f0"/>
<circle cx="793" cy="497.500" r="2.400" fill="#5a5a20" stroke="#c8c890" stroke-width=".5"/>
</svg>
<div class="t" style="left:743px;top:488.300px;font-size:4.300px;color:#e8e8e0;transform:translateX(-50%)">ENG</div>
<div class="t" style="left:743px;top:496.300px;font-size:4.300px;color:#e8e8e0;transform:translateX(-50%)">US</div>
<div class="t" style="left:765.500px;top:488px;font-size:4.600px;color:#f0f0e8;transform:translateX(-50%)">9:14 AM</div>
<div class="t" style="left:765.500px;top:496px;font-size:4.600px;color:#f0f0e8;transform:translateX(-50%)">12/07/2018</div>
<div class="t" style="left:792.100px;top:495.800px;font-size:3.400px;color:#f0f0e0">2</div>


</div>
</body></html>
